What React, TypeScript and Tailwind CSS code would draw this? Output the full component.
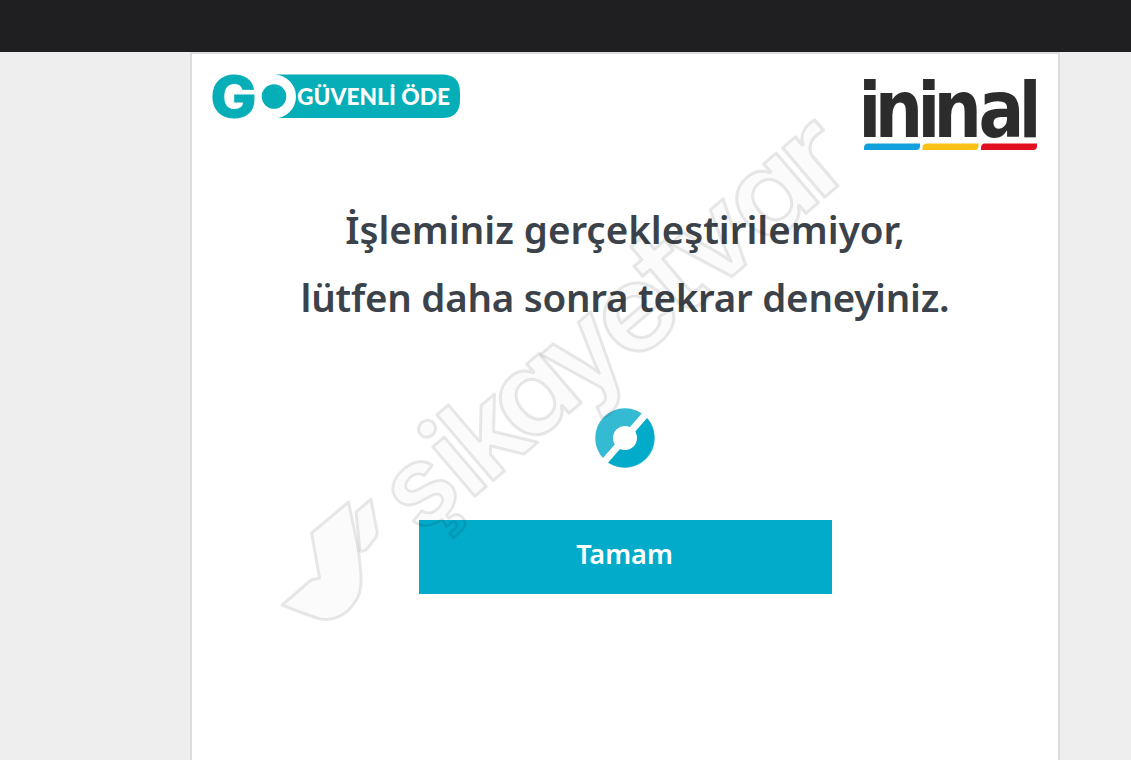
import React from "react";

const WATERMARK = [
  { char: "ş", x: -76, y: -5, scale: 0.94, scaleY: 0.94 },
  { char: "i", x: -16, y: 0, scale: 1, scaleY: 1 },
  { char: "k", x: 8, y: 0, scale: 1, scaleY: 1 },
  { char: "a", x: 62, y: -2, scale: 1.08, scaleY: 1 },
  { char: "y", x: 132, y: 0, scale: 1, scaleY: 1 },
  { char: "e", x: 194, y: 2, scale: 1.08, scaleY: 1 },
  { char: "t", x: 261, y: 0, scale: 1.1, scaleY: 1.1 },
  { char: "v", x: 302, y: 0, scale: 1.06, scaleY: 1 },
  { char: "a", x: 371, y: 0, scale: 1.1, scaleY: 1 },
  { char: "r", x: 443, y: 0, scale: 1.15, scaleY: 1 },
];

const ININAL = [
  { char: "i", x: -5.4, size: 77, scale: 0.86 },
  { char: "n", x: 10.8, size: 81, scale: 0.84 },
  { char: "i", x: 53.4, size: 77, scale: 0.86 },
  { char: "n", x: 69.4, size: 81, scale: 0.84 },
  { char: "a", x: 114.6, size: 81, scale: 0.84 },
  { char: "l", x: 154.8, size: 77, scale: 0.86 },
];

const GoLogo = () => (
  <svg width="250" height="46" viewBox="0 0 250 46" className="block overflow-visible">
    <path d="M64 1.500H230Q248 1.500 248 19.500V27Q248 45 230 45H64Z" fill="#06aeb8" />
    <circle cx="62" cy="23.500" r="22" fill="#fff" />
    <circle cx="62" cy="23.500" r="12.300" fill="#06aeb8" />
    <text
      x="-1.500"
      y="43.500"
      fontFamily="Inter, sans-serif"
      fontWeight="800"
      fontSize="56"
      fill="#06aeb8"
      stroke="#06aeb8"
      strokeWidth="1"
      textLength="46"
      lengthAdjust="spacingAndGlyphs"
    >
      G
    </text>
    <text
      x="85"
      y="32"
      fontFamily="Lato, sans-serif"
      fontWeight="900"
      fontSize="23.500"
      fill="#fff"
      textLength="153"
      lengthAdjust="spacingAndGlyphs"
    >
      GÜVENLİ ÖDE
    </text>
  </svg>
);

const IninalLogo = () => (
  <svg width="174" height="76" viewBox="0 0 174 76" className="block overflow-visible">
    <g fontFamily="'DejaVu Sans', sans-serif" fontWeight="700" fill="#2c2c2c">
      {ININAL.map((letter, index) => (
        <text
          key={index}
          fontSize={letter.size}
          transform={`translate(${letter.x} 58.5) scale(${letter.scale} 1)`}
        >
          {letter.char}
        </text>
      ))}
    </g>
    <path d="M4 65.500H56V68Q56 72 52 72H0V70Q0 65.500 4 65.500Z" fill="#12a0dc" />
    <path d="M63 65.500H114.500V68Q114.500 72 110.500 72H58.500V70Q58.500 65.500 63 65.500Z" fill="#fbc116" />
    <path d="M121 65.500H173V68Q173 72 169 72H117V70Q117 65.500 121 65.500Z" fill="#e10f1f" />
  </svg>
);

const Spinner = () => (
  <svg width="60" height="60" viewBox="0 0 60 60" className="block">
    <circle cx="30" cy="30" r="29.800" fill="#35bad3" />
    <path d="M49.700 7.400A30 30 0 0 1 10.300 52.600Z" fill="#03abcb" />
    <path d="M54 2.500L6 57.500" stroke="#fff" strokeWidth="7" />
    <circle cx="30" cy="30" r="12" fill="#fff" />
  </svg>
);

const Watermark = () => (
  <svg
    width="1131"
    height="760"
    viewBox="0 0 1131 760"
    className="absolute inset-0 pointer-events-none"
  >
    <g
      fill="#000"
      fillOpacity="0.015"
      stroke="#000"
      strokeOpacity="0.090"
      strokeWidth="3"
      strokeLinejoin="round"
    >
      <path d="M348.500 502L311.500 533L319.500 578L311 580L282 605Q304 614 320 619Q342 622 355 602Q362 594 361 575Q360 555 354 528Z" />
      <path d="M356 512L371 499L377 531Q378 536 374 540L367 549Q364 552 360 551Z" />
      <g
        transform="translate(481 491) rotate(-40.5)"
        fontFamily="Inter, sans-serif"
        fontWeight="600"
        fontSize="119"
        className="[font-feature-settings:'cv11']"
      >
        {WATERMARK.map((letter, index) => (
          <text
            key={index}
            transform={`translate(${letter.x} ${letter.y}) scale(${letter.scale} ${letter.scaleY})`}
          >
            {letter.char}
          </text>
        ))}
      </g>
    </g>
  </svg>
);

const App = () => {
  return (
    <div className="relative h-[760px] w-[1131px] overflow-hidden bg-[#eeeeee] flex flex-col">
      <div className="h-[52px] shrink-0 bg-[#1f1f21]" />
      <div className="ml-[190px] w-[870px] flex-1 border-2 border-b-0 border-[#dcdcdc] bg-white">
        <div className="flex justify-between pl-5 pr-5">
          <div className="pt-[19px]">
            <GoLogo />
          </div>
          <div className="pt-6">
            <IninalLogo />
          </div>
        </div>

        <div className="mt-[41px] text-center font-['Noto_Sans',sans-serif] text-[38.5px] leading-[68px] font-semibold text-[#3c4249]">
          <p>İşleminiz gerçekleştirilemiyor,</p>
          <p className="tracking-[-0.25px]">lütfen daha sonra tekrar deneyiniz.</p>
        </div>

        <div className="mt-[77px] flex justify-center">
          <Spinner />
        </div>

        <button className="mt-[52px] ml-[227px] block h-[74px] w-[413px] bg-[#03abcb] pr-0.5 pb-1.5 font-['Noto_Sans',sans-serif] text-[27px] font-semibold text-white">
          Tamam
        </button>
      </div>
      <Watermark />
    </div>
  );
};

export default App;
